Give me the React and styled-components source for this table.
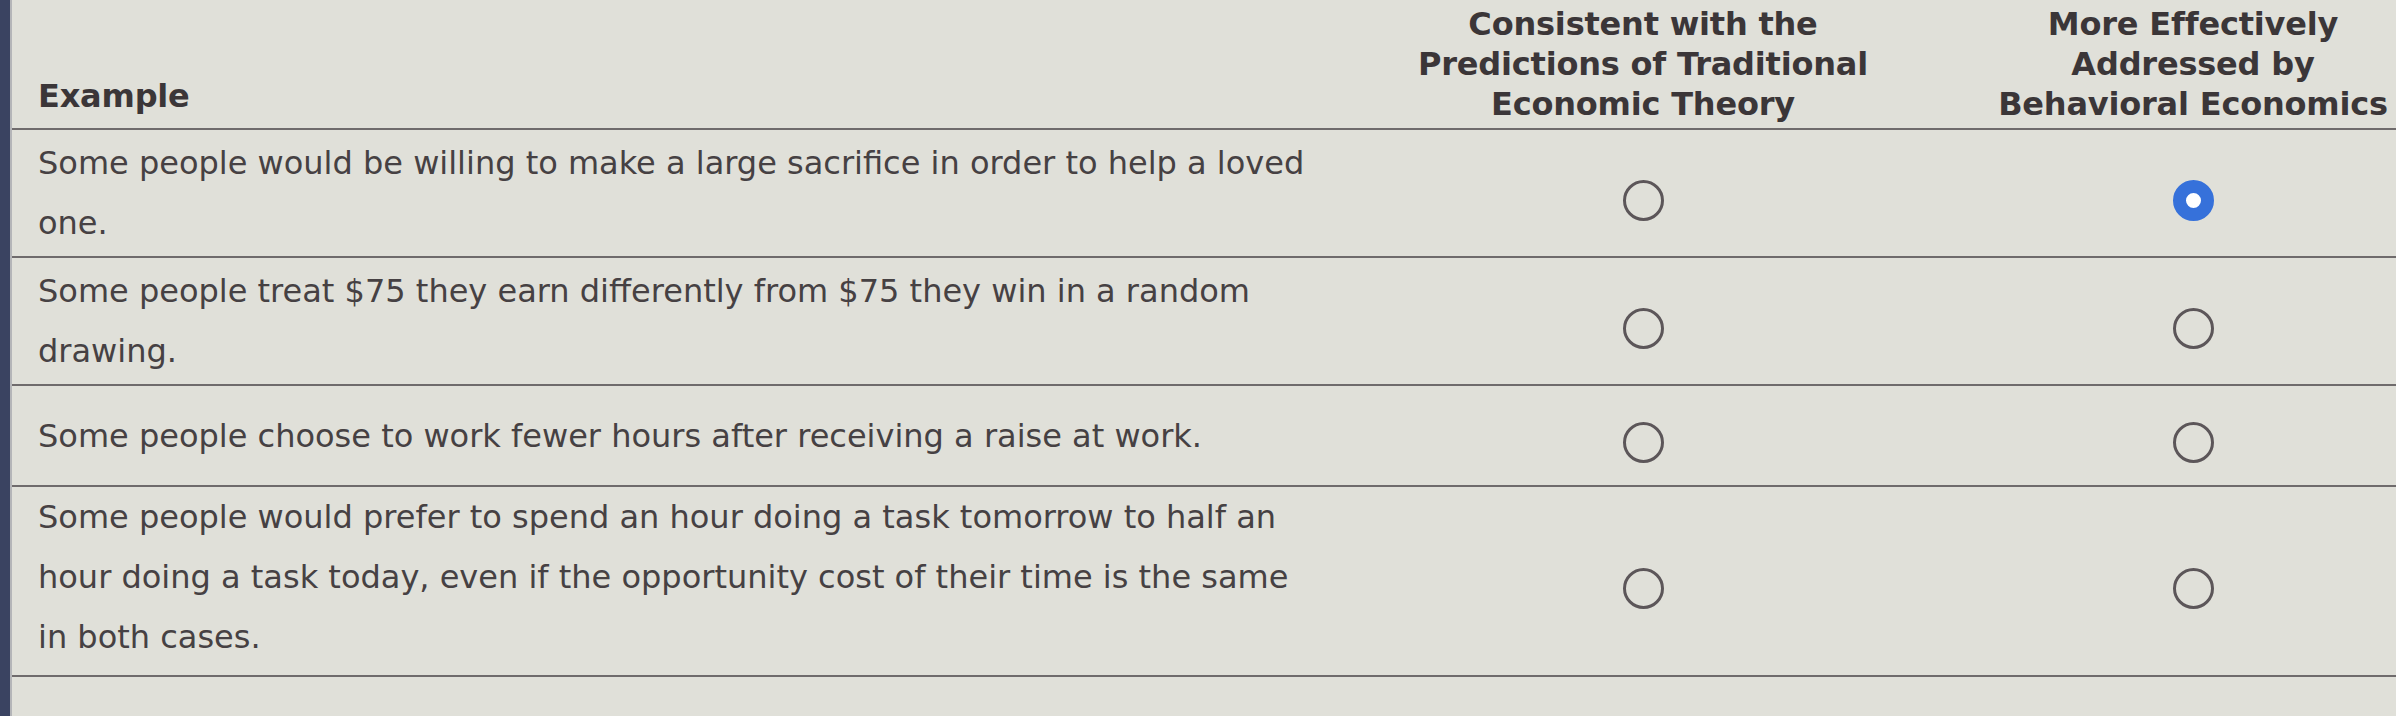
import React, { useState } from 'react'
import styled, { createGlobalStyle } from 'styled-components'

const GlobalStyle = createGlobalStyle`
  html, body {
    margin: 0;
    padding: 0;
    background: #e0e0d9;
    overflow: hidden;
  }
`

const Page = styled.div`
  display: flex;
  width: 2396px;
  height: 716px;
  overflow: hidden;
  background: #e0e0d9;
  font-family: "DejaVu Sans", Verdana, sans-serif;
  color: #464143;
`

const EdgeBar = styled.div`
  flex: none;
  width: 10px;
  background: #3a4361;
  border-right: 2px solid #b4b5b8;
`

const Table = styled.div`
  flex: none;
  display: flex;
  flex-direction: column;
`

const Row = styled.div`
  display: grid;
  grid-template-columns: 1368px 526px 574px;
  border-bottom: 2px solid #6f6b6c;
  min-height: ${(p) => p.$minHeight || 0}px;
`

const HeadCell = styled.div`
  display: flex;
  align-items: flex-end;
  justify-content: ${(p) => (p.$center ? 'center' : 'flex-start')};
  text-align: ${(p) => (p.$center ? 'center' : 'left')};
  padding: 4px ${(p) => (p.$center ? '0' : '26px')} ${(p) => (p.$center ? '4px' : '12px')};
  font-weight: bold;
  font-size: 32px;
  line-height: 40px;
  letter-spacing: -0.2px;
  color: #3b3638;
  white-space: nowrap;
`

const TextCell = styled.div`
  padding: ${(p) => (p.$tall ? '0 26px 8px' : '3px 26px')};
  font-size: 32px;
  line-height: 60px;
  display: flex;
  align-items: center;
`

const RadioCell = styled.div`
  display: flex;
  align-items: center;
  justify-content: center;
  padding-top: 14px;
`

const RadioButton = styled.button`
  width: 41px;
  height: 41px;
  padding: 0;
  border-radius: 50%;
  cursor: pointer;
  background: ${(p) => (p.$checked ? '#ffffff' : 'transparent')};
  border: ${(p) => (p.$checked ? '13px solid #3671da' : '3px solid #5c5659')};
`

const rows = [
  {
    text: 'Some people would be willing to make a large sacrifice in order to help a loved\none.',
    answer: 1,
  },
  {
    text: 'Some people treat $75 they earn differently from $75 they win in a random\ndrawing.',
    answer: null,
  },
  {
    text: 'Some people choose to work fewer hours after receiving a raise at work.',
    answer: null,
    minHeight: 99,
  },
  {
    text: 'Some people would prefer to spend an hour doing a task tomorrow to half an\nhour doing a task today, even if the opportunity cost of their time is the same\nin both cases.',
    answer: null,
    tall: true,
  },
]

const TextLines = ({ text }) => (
  <span>
    {text.split('\n').map((line, i) => (
      <React.Fragment key={i}>
        {i > 0 && <br />}
        {line}
      </React.Fragment>
    ))}
  </span>
)

export default function App() {
  const [answers, setAnswers] = useState(rows.map((r) => r.answer))

  const choose = (rowIndex, col) => {
    const next = [...answers]
    next[rowIndex] = col
    setAnswers(next)
  }

  return (
    <Page>
      <GlobalStyle />
      <EdgeBar />
      <Table>
        <Row>
          <HeadCell>Example</HeadCell>
          <HeadCell $center>
            Consistent with the
            <br />
            Predictions of Traditional
            <br />
            Economic Theory
          </HeadCell>
          <HeadCell $center>
            More Effectively
            <br />
            Addressed by
            <br />
            Behavioral Economics
          </HeadCell>
        </Row>
        {rows.map((row, i) => (
          <Row key={i} $minHeight={row.minHeight}>
            <TextCell $tall={row.tall}>
              <TextLines text={row.text} />
            </TextCell>
            {[0, 1].map((col) => (
              <RadioCell key={col}>
                <RadioButton
                  $checked={answers[i] === col}
                  aria-label={col === 0 ? 'Traditional' : 'Behavioral'}
                  onClick={() => choose(i, col)}
                />
              </RadioCell>
            ))}
          </Row>
        ))}
      </Table>
    </Page>
  )
}
